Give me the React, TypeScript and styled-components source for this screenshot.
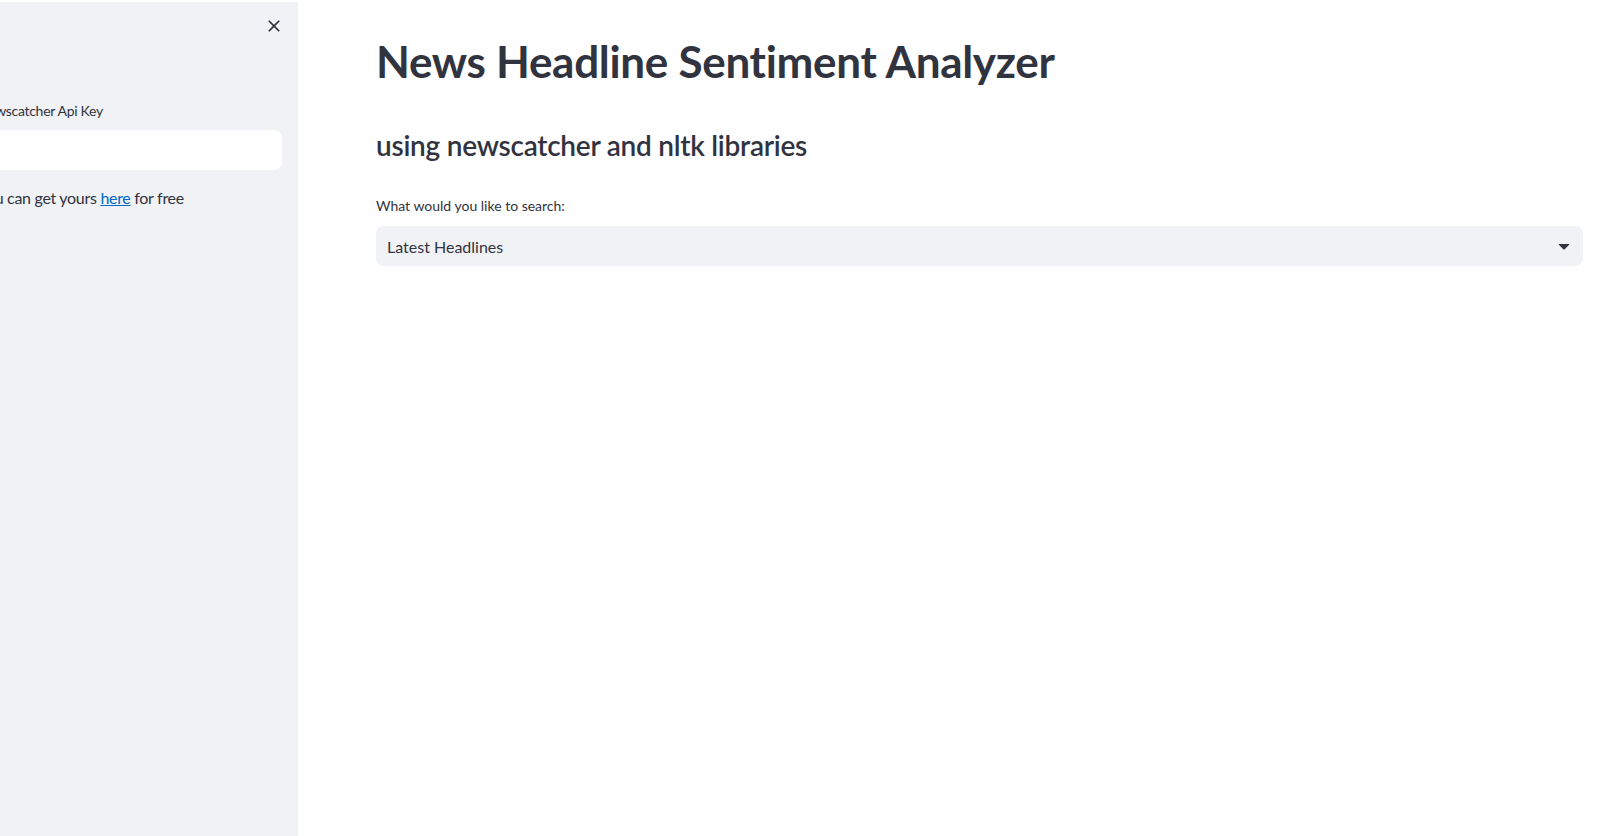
import styled, { createGlobalStyle } from 'styled-components';

const GlobalStyle = createGlobalStyle`
  html, body {
    margin: 0;
    padding: 0;
    background: #ffffff;
  }
  body {
    font-family: "Source Sans Pro", Lato, "Noto Sans", sans-serif;
    color: #31333f;
    overflow: hidden;
  }
  * {
    box-sizing: border-box;
  }
`;

const Page = styled.div`
  display: flex;
  width: 100vw;
  height: 100vh;
`;

const Sidebar = styled.aside`
  position: relative;
  flex: 0 0 298px;
  height: 100%;
  background: #f0f2f6;
  border-top: 2px solid #ffffff;
  overflow: hidden;
`;

const CloseButton = styled.button`
  position: absolute;
  top: 12px;
  right: 12px;
  width: 24px;
  height: 24px;
  padding: 0;
  border: none;
  background: transparent;
  display: flex;
  align-items: center;
  justify-content: center;
  color: #31333f;
  cursor: pointer;
`;

// the sidebar is scrolled a little to the left, so its text is clipped
const SidebarContent = styled.div`
  display: flex;
  flex-direction: column;
  margin-left: -22px;
  padding: 99px 16px 0 0;
`;

const FieldLabel = styled.label`
  display: block;
  font-size: 14px;
  line-height: 20px;
  color: #31333f;
  white-space: nowrap;
`;

const SidebarLabel = styled(FieldLabel)`
  letter-spacing: -0.3px;
`;

const TextInput = styled.input`
  display: block;
  width: 100%;
  height: 40px;
  margin-top: 9px;
  border: none;
  border-radius: 8px;
  background: #ffffff;
  padding: 0 12px;
  font-family: inherit;
  font-size: 16px;
  outline: none;
`;

const Hint = styled.p`
  margin: 16px 0 0;
  font-size: 16px;
  line-height: 24px;
  letter-spacing: -0.3px;
  white-space: nowrap;

  a {
    color: #0068c9;
    text-decoration: underline;
  }
`;

const Main = styled.main`
  flex: 1;
  min-width: 0;
  padding: 35px 17px 0 78px;
`;

const Title = styled.h1`
  margin: 0;
  font-size: 44px;
  line-height: 53px;
  font-weight: 700;
  letter-spacing: -0.3px;
  color: #31333f;
`;

const Subtitle = styled.h3`
  margin: 40px 0 0;
  font-size: 28px;
  line-height: 34px;
  font-weight: 600;
  letter-spacing: -0.25px;
  color: #31333f;
`;

const SearchLabel = styled(FieldLabel)`
  margin-top: 34px;
`;

const Select = styled.div`
  display: flex;
  align-items: center;
  justify-content: space-between;
  height: 40px;
  margin-top: 10px;
  padding: 0 7px 0 11px;
  border-radius: 8px;
  background: #f0f2f6;
  font-size: 16px;
  color: #31333f;
`;

const Arrow = styled.svg`
  width: 24px;
  height: 24px;
  fill: #31333f;
`;

export default function App() {
  return (
    <>
      <GlobalStyle />
      <Page>
        <Sidebar>
          <CloseButton aria-label="Close sidebar">
            <svg width="20" height="20" viewBox="0 0 24 24" fill="currentColor">
              <path d="M19 6.41L17.59 5 12 10.59 6.41 5 5 6.41 10.59 12 5 17.59 6.41 19 12 13.41 17.59 19 19 17.59 13.41 12z" />
            </svg>
          </CloseButton>
          <SidebarContent>
            <SidebarLabel>Newscatcher Api Key</SidebarLabel>
            <TextInput type="password" />
            <Hint>
              You can get yours <a href="#">here</a> for free
            </Hint>
          </SidebarContent>
        </Sidebar>
        <Main>
          <Title>News Headline Sentiment Analyzer</Title>
          <Subtitle>using newscatcher and nltk libraries</Subtitle>
          <SearchLabel>What would you like to search:</SearchLabel>
          <Select>
            <span>Latest Headlines</span>
            <Arrow viewBox="0 0 24 24">
              <path d="M12.7071 15.2929L17.1464 10.8536C17.4614 10.5386 17.2383 10 16.7929 10H7.20711C6.76165 10 6.53857 10.5386 6.85355 10.8536L11.2929 15.2929C11.6834 15.6834 12.3166 15.6834 12.7071 15.2929Z" />
            </Arrow>
          </Select>
        </Main>
      </Page>
    </>
  );
}
